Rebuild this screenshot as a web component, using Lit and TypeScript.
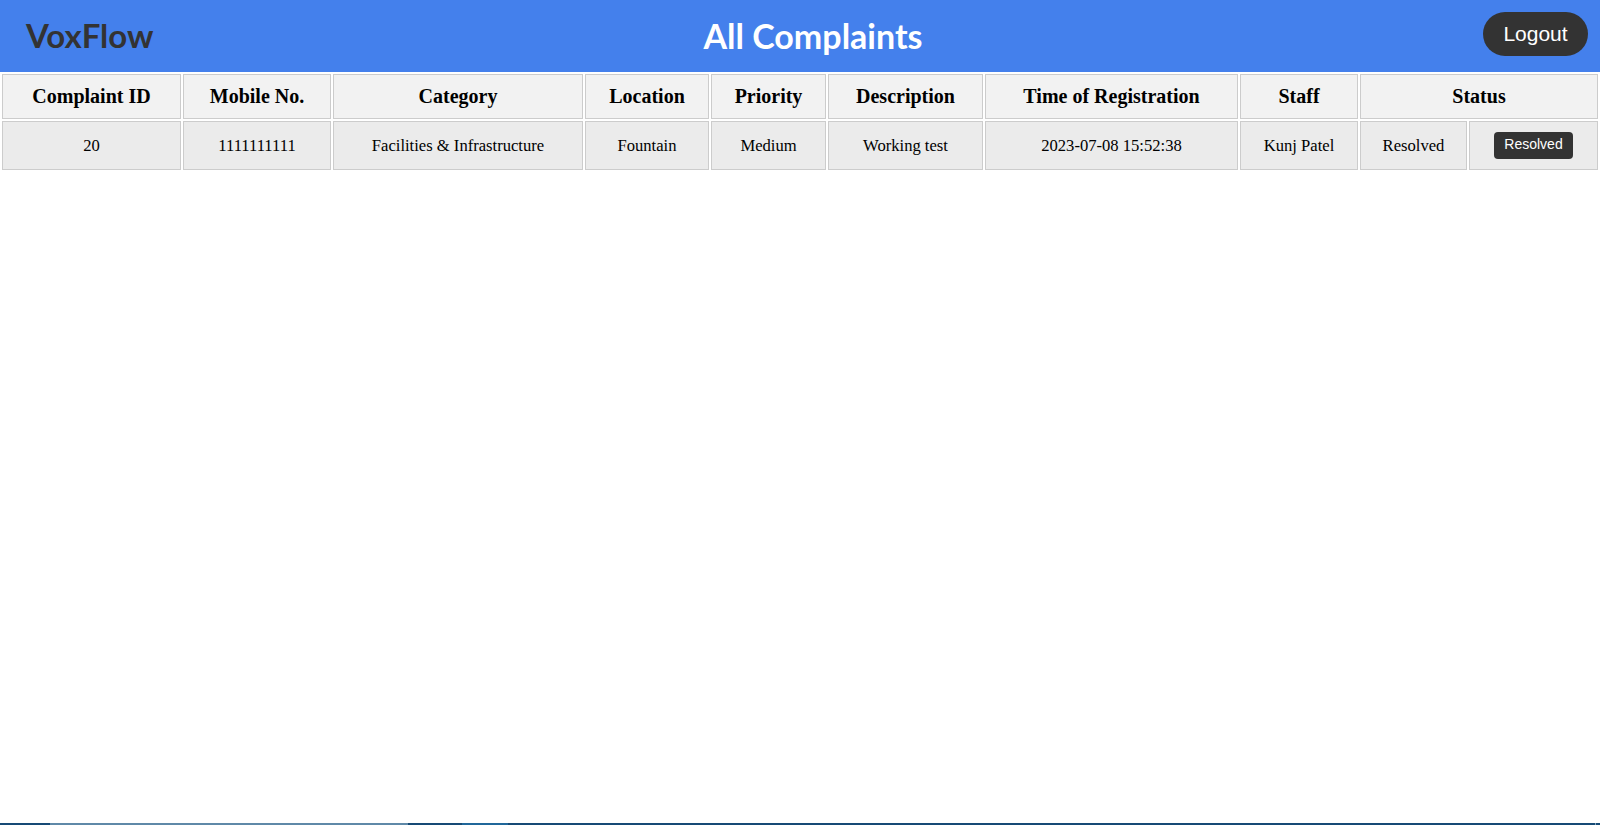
import { LitElement, html, css } from "lit";
import { customElement } from "lit/decorators.js";

@customElement("app-root")
export class AppRoot extends LitElement {
  static styles = css`
    :host {
      display: flex;
      flex-direction: column;
      height: 825px;
      overflow: hidden;
      background: #fff;
      font-family: "Liberation Serif", serif;
      color: #000;
    }
    .topbar {
      flex: none;
      height: 72px;
      background: #4480ec;
      display: grid;
      grid-template-columns: 1fr auto 1fr;
      align-items: center;
      padding: 0 12px 0 26px;
      font-family: Lato, sans-serif;
      font-weight: 700;
    }
    .brand {
      font-size: 33px;
      color: #333;
      margin-bottom: 2px;
    }
    .title {
      font-size: 34px;
      color: #fff;
      margin: 0 0 2px 12px;
      font-weight: 700;
    }
    .logout {
      justify-self: end;
      width: 105px;
      height: 44px;
      margin-top: -4px;
      border: none;
      border-radius: 22px;
      background: #333;
      color: #fff;
      font: 21px "Liberation Sans", sans-serif;
      padding: 0;
    }
    table {
      flex: none;
      width: 1600px;
      table-layout: fixed;
      border-collapse: separate;
      border-spacing: 2px;
    }
    .c1 { width: 179px; }
    .c2 { width: 148px; }
    .c3 { width: 250px; }
    .c4 { width: 124px; }
    .c5 { width: 115px; }
    .c6 { width: 155px; }
    .c7 { width: 253px; }
    .c8 { width: 118px; }
    .c9 { width: 107px; }
    .c10 { width: 129px; }
    th, td {
      box-sizing: border-box;
      border: 1px solid #ccc;
      text-align: center;
      padding: 0;
    }
    th {
      height: 45px;
      background: #f2f2f2;
      font-size: 20px;
      font-weight: 700;
    }
    td {
      height: 49px;
      background: #ebebeb;
      font-size: 16.6px;
    }
    .resolved {
      width: 79px;
      height: 27px;
      border: none;
      border-radius: 4px;
      background: #333;
      color: #fff;
      font: 14px "Liberation Sans", sans-serif;
      padding: 0 0 3px;
      vertical-align: middle;
    }
    .strip {
      flex: none;
      margin-top: auto;
      height: 2px;
      display: flex;
      background: #164a75;
    }
    .strip .a { width: 50px; }
    .strip .b { width: 358px; background: #5f89a8; }
    .strip .c { width: 54px; }
    .strip .d { width: 46px; background: #20679a; }
    .strip .e { width: 1px; margin-left: 1087px; background: #7fa3bd; }
  `;

  render() {
    const heads: [string, number][] = [
      ["Complaint ID", 1],
      ["Mobile No.", 1],
      ["Category", 1],
      ["Location", 1],
      ["Priority", 1],
      ["Description", 1],
      ["Time of Registration", 1],
      ["Staff", 1],
      ["Status", 2],
    ];
    const cells = [
      "20",
      "1111111111",
      "Facilities & Infrastructure",
      "Fountain",
      "Medium",
      "Working test",
      "2023-07-08 15:52:38",
      "Kunj Patel",
      "Resolved",
    ];
    return html`
      <header class="topbar">
        <div class="brand">VoxFlow</div>
        <h1 class="title">All Complaints</h1>
        <button class="logout">Logout</button>
      </header>
      <table>
        <colgroup>
          ${[1, 2, 3, 4, 5, 6, 7, 8, 9, 10].map((n) => html`<col class="c${n}" />`)}
        </colgroup>
        <thead>
          <tr>${heads.map(([h, span]) => html`<th colspan=${span}>${h}</th>`)}</tr>
        </thead>
        <tbody>
          <tr>
            ${cells.map((c) => html`<td>${c}</td>`)}
            <td><button class="resolved">Resolved</button></td>
          </tr>
        </tbody>
      </table>
      <div class="strip">
        <span class="a"></span><span class="b"></span><span class="c"></span><span class="d"></span><span class="e"></span>
      </div>
    `;
  }
}
